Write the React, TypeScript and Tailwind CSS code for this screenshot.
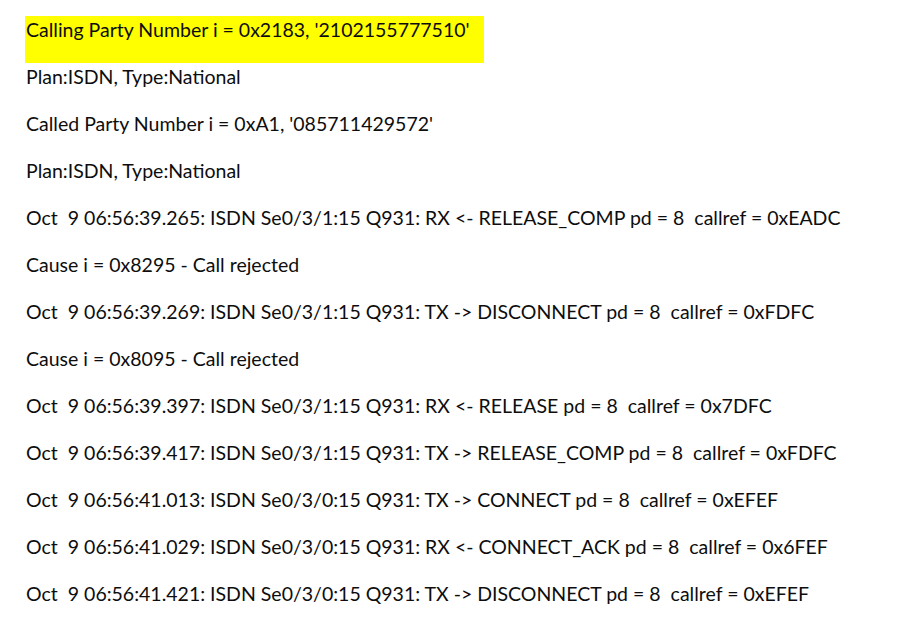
const lines = [
  "Plan:ISDN, Type:National",
  "Called Party Number i = 0xA1, '085711429572'",
  "Plan:ISDN, Type:National",
  "Oct  9 06:56:39.265: ISDN Se0/3/1:15 Q931: RX <- RELEASE_COMP pd = 8  callref = 0xEADC",
  "Cause i = 0x8295 - Call rejected",
  "Oct  9 06:56:39.269: ISDN Se0/3/1:15 Q931: TX -> DISCONNECT pd = 8  callref = 0xFDFC",
  "Cause i = 0x8095 - Call rejected",
  "Oct  9 06:56:39.397: ISDN Se0/3/1:15 Q931: RX <- RELEASE pd = 8  callref = 0x7DFC",
  "Oct  9 06:56:39.417: ISDN Se0/3/1:15 Q931: TX -> RELEASE_COMP pd = 8  callref = 0xFDFC",
  "Oct  9 06:56:41.013: ISDN Se0/3/0:15 Q931: TX -> CONNECT pd = 8  callref = 0xEFEF",
  "Oct  9 06:56:41.029: ISDN Se0/3/0:15 Q931: RX <- CONNECT_ACK pd = 8  callref = 0x6FEF",
  "Oct  9 06:56:41.421: ISDN Se0/3/0:15 Q931: TX -> DISCONNECT pd = 8  callref = 0xEFEF",
];

export default function App() {
  return (
    <div className="bg-white min-h-screen w-[900px] h-[624px] overflow-hidden pt-[16px] pl-[25px] text-[#0d0d0d] font-['Lato',sans-serif] text-[19.5px]">
      <div className="w-[459px] h-[47px] bg-[#ffff00] pl-px leading-[28px] whitespace-pre">
        Calling Party Number i = 0x2183, '2102155777510'
      </div>
      {lines.map((l, i) => (
        <div key={i} className="h-[47px] pl-px leading-[28px] whitespace-pre">
          {l}
        </div>
      ))}
    </div>
  );
}
